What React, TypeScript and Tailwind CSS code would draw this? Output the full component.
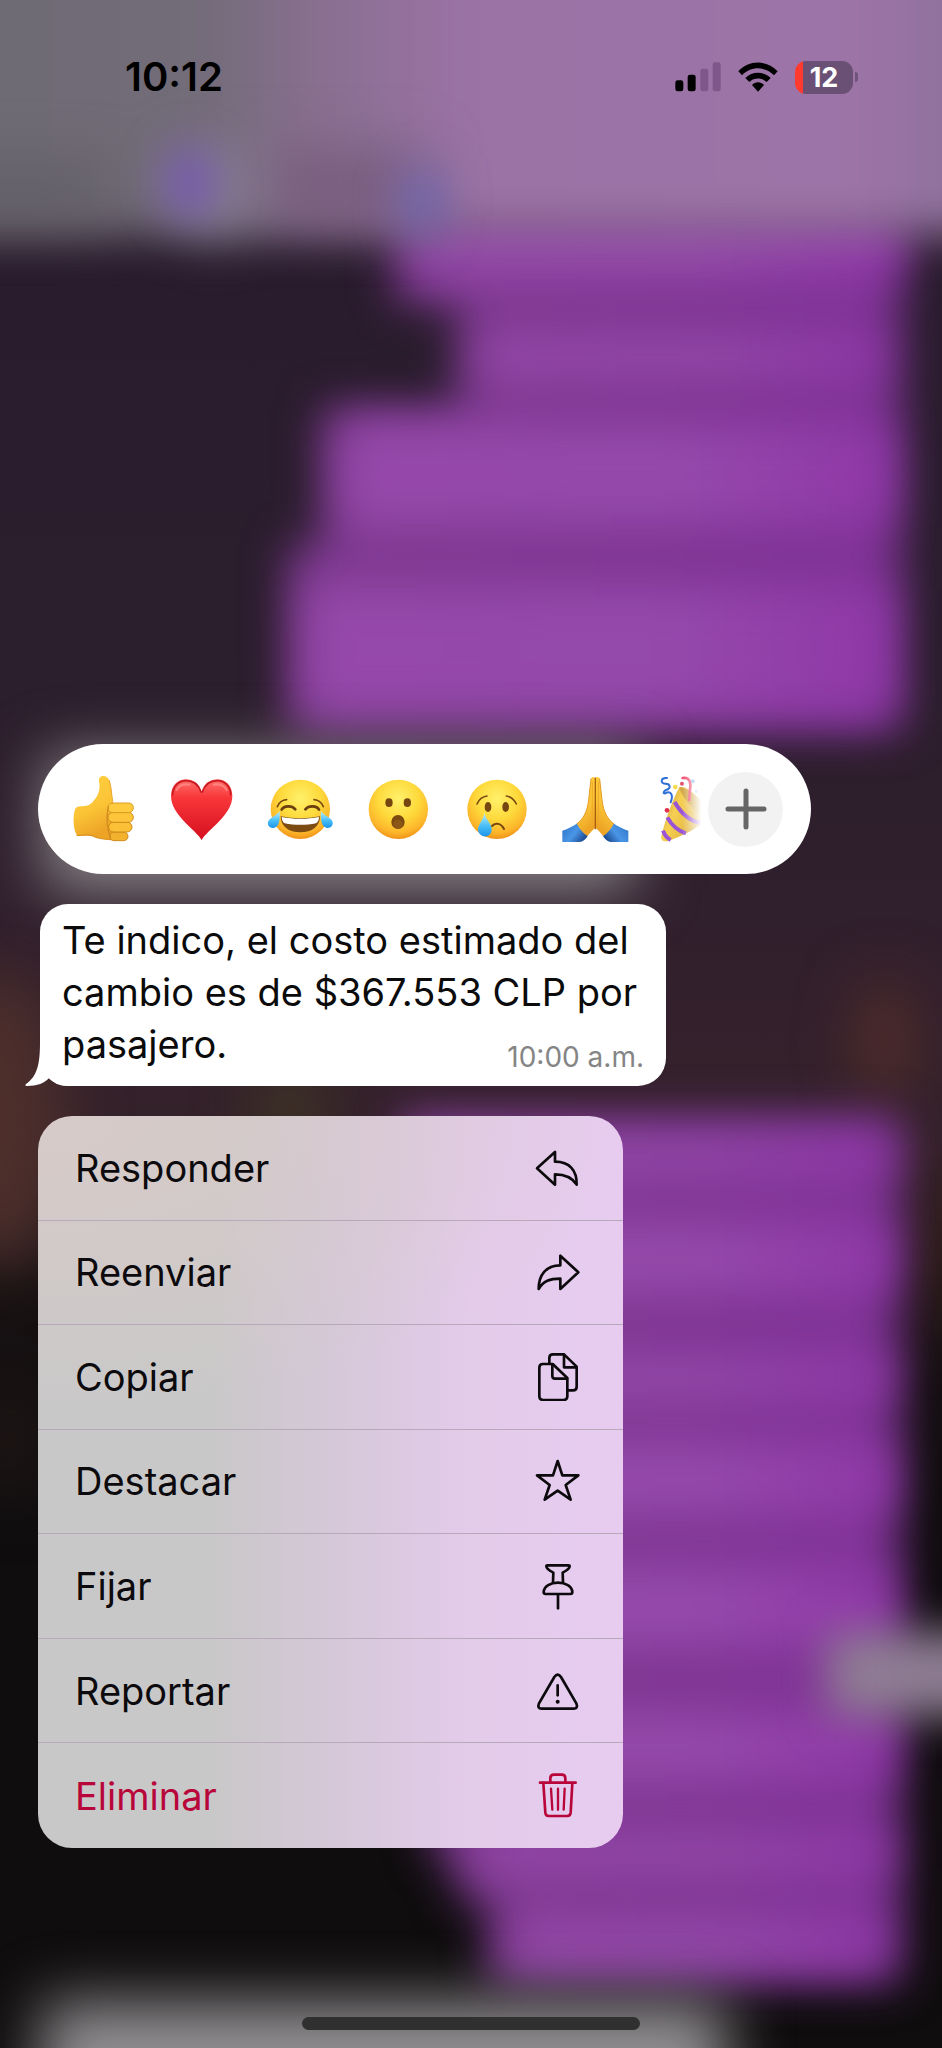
import type { ReactNode } from "react";

/* ---------- Blurred chat wallpaper ---------- */

const bubbleRects: [number, number, number, number][] = [
  [395, 215, 506, 88],
  [458, 297, 443, 112],
  [322, 407, 579, 143],
  [288, 545, 613, 187],
  [400, 1116, 500, 600],
  [430, 1700, 471, 155],
  [455, 1840, 446, 60],
  [488, 1890, 413, 94],
];

const lightBands: [number, number, number, number][] = [
  [420, 232, 480, 46],
  [480, 338, 400, 38],
  [345, 426, 545, 98],
  [308, 588, 582, 124],
  [420, 1140, 470, 34],
  [420, 1224, 470, 70],
  [420, 1358, 470, 40],
  [420, 1444, 470, 70],
  [420, 1568, 470, 78],
  [420, 1714, 470, 66],
  [480, 1836, 410, 36],
  [515, 1920, 365, 42],
];

function Wallpaper() {
  return (
    <svg
      aria-hidden="true"
      className="absolute inset-0 size-full"
      viewBox="0 0 942 2048"
      preserveAspectRatio="none"
    >
      <defs>
        <filter id="soft" x="-100%" y="-100%" width="300%" height="300%" colorInterpolationFilters="sRGB">
          <feGaussianBlur stdDeviation="22" />
        </filter>
        <filter id="softer" x="-100%" y="-100%" width="300%" height="300%" colorInterpolationFilters="sRGB">
          <feGaussianBlur stdDeviation="30" />
        </filter>
        <linearGradient id="night" x1="0" y1="0" x2="0" y2="1">
          <stop offset="0.1" stopColor="#291c2d" />
          <stop offset="0.33" stopColor="#2b1e2d" />
          <stop offset="0.5" stopColor="#33202c" />
          <stop offset="0.56" stopColor="#34222a" />
          <stop offset="0.63" stopColor="#171112" />
          <stop offset="0.75" stopColor="#0f0d0e" />
          <stop offset="1" stopColor="#0f0d0e" />
        </linearGradient>
        <linearGradient id="header" x1="0" y1="0" x2="1" y2="0">
          <stop offset="0.1" stopColor="#6f6b75" />
          <stop offset="0.26" stopColor="#736c79" />
          <stop offset="0.36" stopColor="#896f90" />
          <stop offset="0.5" stopColor="#9b73a5" />
          <stop offset="0.85" stopColor="#9d74a7" />
          <stop offset="0.97" stopColor="#8a7098" />
        </linearGradient>
        <linearGradient id="bubble" x1="0" y1="0" x2="1" y2="0">
          <stop offset="0" stopColor="#803a92" />
          <stop offset="1" stopColor="#803397" />
        </linearGradient>
        <linearGradient id="band" x1="0" y1="0" x2="1" y2="0">
          <stop offset="0" stopColor="#9549aa" />
          <stop offset="0.6" stopColor="#944aaa" />
          <stop offset="1" stopColor="#9037a8" />
        </linearGradient>
      </defs>
      <rect width="942" height="2048" fill="url(#night)" />
      <g filter="url(#softer)">
        <ellipse cx="0" cy="1120" rx="65" ry="150" fill="#4d2f2b" />
        <ellipse cx="885" cy="1040" rx="26" ry="60" fill="#57302a" />
        <ellipse cx="942" cy="1250" rx="22" ry="90" fill="#3a2420" />
        <ellipse cx="10" cy="1440" rx="30" ry="60" fill="#1f1716" />
        <ellipse cx="290" cy="1105" rx="36" ry="24" fill="#464020" />
      </g>
      <g filter="url(#soft)">
        {bubbleRects.map(([x, y, w, h]) => (
          <rect key={y} x={x} y={y} width={w} height={h} fill="url(#bubble)" />
        ))}
      </g>
      <g filter="url(#soft)">
        {lightBands.map(([x, y, w, h]) => (
          <rect key={y} x={x} y={y} width={w} height={h} fill="url(#band)" />
        ))}
      </g>
      <g filter="url(#soft)">
        <rect x="-80" y="-80" width="1102" height="315" fill="url(#header)" />
      </g>
      <g filter="url(#softer)">
        <rect x="-80" y="170" width="190" height="44" fill="#5e5b62" />
        <rect x="270" y="155" width="150" height="62" fill="#745a7a" />
        <ellipse cx="215" cy="190" rx="36" ry="40" fill="#8c8496" />
      </g>
      <g filter="url(#soft)">
        <ellipse cx="190" cy="183" rx="24" ry="36" fill="#7655b4" />
        <ellipse cx="422" cy="202" rx="22" ry="34" fill="#6d66b0" />
      </g>
      <g filter="url(#softer)">
        <rect x="45" y="755" width="590" height="135" fill="#8c888b" />
        <rect x="42" y="2002" width="684" height="140" fill="#929092" />
      </g>
      <g filter="url(#soft)">
        <rect x="828" y="1632" width="200" height="84" fill="#8f7e94" />
      </g>
    </svg>
  );
}

/* ---------- Status bar ---------- */

function StatusBar() {
  return (
    <header className="flex items-center justify-between pt-[56px] pr-[84px] pl-[125px]">
      <time className="text-[40px] leading-[42px] font-semibold text-black">10:12</time>
      <div className="flex items-center gap-[17px]">
        <svg aria-label="Señal móvil" role="img" className="h-[30px] w-[46px]" viewBox="106 64 138 90">
          <rect x="107" y="119" width="24" height="33" rx="7" />
          <rect x="144" y="102" width="24" height="50" rx="7" />
          <rect x="182" y="84" width="24" height="68" rx="7" fill="#80578a" />
          <rect x="219" y="65" width="24" height="87" rx="7" fill="#80578a" />
        </svg>
        <svg aria-label="Wi-Fi" role="img" className="h-[30px] w-[40px]" viewBox="294 64 120 90">
          <path d="M295 92 C326 57 382 57 413 92 L402 104 C376 76 332 76 306 104Z" />
          <path d="M316 112 C337 91 371 91 392 112 L380 124 C366 110 342 110 328 124Z" />
          <path d="M336 133 C346 122 362 122 372 133 L354 153Z" />
        </svg>
        <div className="flex items-center gap-[2px]">
          <div className="flex h-[33px] w-[58px] items-center overflow-hidden rounded-[11px] bg-[#6b5075] bg-linear-to-r from-[#ff3b2f] from-13% to-transparent to-13%">
            <span className="w-full text-center text-[27px] leading-[33px] font-bold text-white">12</span>
          </div>
          <div className="h-[10px] w-[3px] rounded-r-full bg-[#6f547a]" />
        </div>
      </div>
    </header>
  );
}

/* ---------- Reaction drawings ---------- */

function EmojiDefs() {
  return (
    <svg aria-hidden="true" className="absolute size-0">
      <defs>
        <radialGradient id="face" cx="0.5" cy="0.32" r="0.7">
          <stop offset="0" stopColor="#fff16b" />
          <stop offset="0.5" stopColor="#fed93b" />
          <stop offset="0.82" stopColor="#fcb52a" />
          <stop offset="1" stopColor="#ee8c14" />
        </radialGradient>
        <linearGradient id="skin" x1="0" y1="0" x2="0.3" y2="1">
          <stop offset="0" stopColor="#ffcf40" />
          <stop offset="0.6" stopColor="#fbc436" />
          <stop offset="1" stopColor="#eda326" />
        </linearGradient>
        <linearGradient id="heart" x1="0" y1="0" x2="0" y2="1">
          <stop offset="0" stopColor="#ff6f6b" />
          <stop offset="0.3" stopColor="#f8373a" />
          <stop offset="1" stopColor="#d50f1f" />
        </linearGradient>
        <linearGradient id="tear" x1="0" y1="0" x2="0" y2="1">
          <stop offset="0" stopColor="#bdeeff" />
          <stop offset="0.55" stopColor="#49bff7" />
          <stop offset="1" stopColor="#1c94ea" />
        </linearGradient>
        <linearGradient id="sleeve" x1="0" y1="0" x2="1" y2="0.6">
          <stop offset="0" stopColor="#2b6fc4" />
          <stop offset="0.6" stopColor="#4a96e6" />
          <stop offset="1" stopColor="#1d4f98" />
        </linearGradient>
        <linearGradient id="cone" x1="0" y1="0" x2="1" y2="0.5">
          <stop offset="0" stopColor="#b98a35" />
          <stop offset="0.4" stopColor="#f6cf52" />
          <stop offset="1" stopColor="#d9a83a" />
        </linearGradient>
      </defs>
    </svg>
  );
}

function Emoji({ viewBox, children }: { viewBox: string; children: ReactNode }) {
  return (
    <svg aria-hidden="true" className="size-[66px] overflow-visible" viewBox={viewBox} fill="none" strokeLinecap="round">
      {children}
    </svg>
  );
}

const thumb = (
  <Emoji viewBox="124 108 198 198">
    <path
      d="M142 201C156 196 172 202 187 188C203 172 214 152 208 124C205 104 233 102 239 122C246 144 245 162 249 186L252 298C228 300 205 296 190 288C174 281 160 290 145 287C129 280 127 208 142 201Z"
      fill="url(#skin)"
    />
    <path d="M142 286C158 288 172 281 190 288C205 296 222 298 244 299" stroke="#dd9420" strokeWidth="4" />
    <path d="M239 122C246 144 245 162 249 184" stroke="#e9a42b" strokeWidth="3" />
    <rect x="240" y="276" width="55" height="26" rx="13" fill="#f3b22e" stroke="#cf8a1c" strokeWidth="3" />
    <rect x="237" y="246" width="70" height="30" rx="15" fill="#fbc036" stroke="#cf8a1c" strokeWidth="3" />
    <rect x="235" y="217" width="76" height="30" rx="15" fill="#fdc63a" stroke="#cf8a1c" strokeWidth="3" />
    <rect x="235" y="189" width="76" height="29" rx="14" fill="#fecb3e" stroke="#d99a24" strokeWidth="3" />
    <path d="M236 200C230 230 232 268 243 294" stroke="#d08d1e" strokeWidth="4" />
  </Emoji>
);

const heart = (
  <Emoji viewBox="417 108 198 198">
    <path
      d="M515 300C497 268 423 226 423 168C423 136 444 118 468 118C492 118 510 134 515 156C520 134 538 118 562 118C586 118 607 136 607 168C607 226 533 268 515 300Z"
      fill="url(#heart)"
    />
    <path d="M428 165C428 138 447 122 468 122C490 122 506 136 513 156M517 156C524 136 540 122 562 122C583 122 602 138 602 165" stroke="#c91a22" strokeWidth="5" />
    <path d="M440 150C448 135 462 131 478 134M552 134C568 131 582 136 590 150" stroke="#ffa7a0" strokeWidth="7" opacity="0.5" />
  </Emoji>
);

const laugh = (
  <Emoji viewBox="711 108 198 198">
    <circle cx="811" cy="208" r="89" fill="url(#face)" />
    <path d="M742 200C747 188 756 180 770 179M880 200C875 188 866 180 852 179" stroke="#7a4a12" strokeWidth="5" />
    <path d="M755 209C762 196 786 196 796 208M867 209C860 196 836 196 826 208" stroke="#6b3f0e" strokeWidth="8" />
    <path d="M752 229C790 237 832 237 870 229C870 260 846 277 811 277S752 260 752 229Z" fill="#7b4b12" />
    <path d="M755 231C790 238 832 238 867 231C867 240 864 246 858 250C828 256 794 256 764 250C758 246 755 240 755 231Z" fill="#fff" />
    <path d="M749 214C751 240 747 262 731 264C713 265 708 245 721 236C732 229 742 223 749 214Z" fill="url(#tear)" />
    <path d="M873 214C871 240 875 262 891 264C909 265 914 245 901 236C890 229 880 223 873 214Z" fill="url(#tear)" />
  </Emoji>
);

const wow = (
  <Emoji viewBox="1005 108 198 198">
    <circle cx="1105" cy="208" r="89" fill="url(#face)" />
    <ellipse cx="1077" cy="188" rx="11" ry="13" fill="#75460f" />
    <ellipse cx="1132" cy="188" rx="11" ry="13" fill="#75460f" />
    <ellipse cx="1104" cy="246" rx="20" ry="21" fill="#7b4a10" />
    <ellipse cx="1104" cy="252" rx="14" ry="13" fill="#8c5716" />
  </Emoji>
);

const cry = (
  <Emoji viewBox="99 108 198 198">
    <circle cx="201" cy="208" r="89" fill="url(#face)" />
    <path d="M141 192C147 178 156 170 171 168M229 168C243 170 252 178 259 192" stroke="#7a4a12" strokeWidth="5" />
    <ellipse cx="174" cy="201" rx="10" ry="15" fill="#75460f" />
    <ellipse cx="227" cy="201" rx="10" ry="15" fill="#75460f" />
    <path d="M186 258C196 246 214 250 222 267" stroke="#75460f" strokeWidth="6" />
    <path d="M163 219C167 240 186 250 185 270C183 297 145 295 144 268C145 252 160 240 163 219Z" fill="url(#tear)" />
  </Emoji>
);

const prayHalf = (
  <>
    <path d="M397 272C414 266 430 258 444 248C452 264 462 278 474 286C468 298 461 304 450 306L397 306Z" fill="url(#sleeve)" />
    <path
      d="M483 117C485 109 495 109 496 118L496 264C486 270 480 280 472 288C460 280 448 266 441 251C458 240 472 216 476 180Z"
      fill="url(#skin)"
    />
    <path d="M483 117L476 180C472 216 458 240 441 251" stroke="#e39a20" strokeWidth="3" />
  </>
);

const pray = (
  <Emoji viewBox="393 108 198 198">
    {prayHalf}
    <g transform="translate(992 0) scale(-1 1)">{prayHalf}</g>
    <path d="M496 114V266" stroke="#a8620f" strokeWidth="4" />
    <path d="M487 126V250M505 126V250" stroke="#f0a828" strokeWidth="3" />
  </Emoji>
);

const party = (
  <Emoji viewBox="687 108 198 198">
    <path d="M748 142C772 132 832 190 838 232C812 262 744 294 712 304C698 306 692 300 694 290C704 242 728 180 748 142Z" fill="url(#cone)" />
    <path d="M748 142C770 136 830 190 838 232C800 226 756 176 748 142Z" fill="#d3a647" />
    <path d="M734 186C754 222 782 244 815 250M712 232C726 258 744 272 768 280M699 272C704 286 710 294 722 300" stroke="#9a53d6" strokeWidth="12" strokeLinecap="butt" />
    <path d="M711 114C692 112 690 130 705 131C722 130 724 146 708 150C700 154 698 162 706 160C720 152 732 162 722 187" stroke="#2f6fd8" strokeWidth="6" />
    <path d="M758 114C780 110 784 130 780 150L778 180" stroke="#f0476c" strokeWidth="8" />
    <circle cx="736" cy="141" r="7" fill="#f6dc4c" />
    <circle cx="756" cy="131" r="6" fill="#e0506a" />
    <circle cx="711" cy="211" r="7" fill="#e0304c" />
    <circle cx="789" cy="124" r="6" fill="#7fb0ea" />
    <circle cx="799" cy="154" r="5" fill="#a8ccf4" />
  </Emoji>
);

const reactions: { name: string; art: ReactNode }[] = [
  { name: "Me gusta", art: thumb },
  { name: "Corazón", art: heart },
  { name: "Risa", art: laugh },
  { name: "Asombro", art: wow },
  { name: "Tristeza", art: cry },
  { name: "Gracias", art: pray },
  { name: "Fiesta", art: party },
];

function ReactionBar() {
  return (
    <div className="flex h-[130px] w-full max-w-[773px] items-center rounded-full bg-white pr-[28px] pl-[17px]">
      <div className="flex min-w-0 flex-1 overflow-hidden mask-r-from-96% mask-r-to-99%">
        {reactions.map(({ name, art }) => (
          <button key={name} type="button" aria-label={name} className="flex w-[98px] shrink-0 justify-center py-4">
            {art}
          </button>
        ))}
      </div>
      <button
        type="button"
        aria-label="Más reacciones"
        className="flex size-[75px] shrink-0 items-center justify-center rounded-full bg-[#f2f2f2]"
      >
        <svg aria-hidden="true" className="size-[42px]" viewBox="0 0 42 42" stroke="#666" strokeWidth="5" strokeLinecap="round">
          <path d="M21 3V39M3 21H39" />
        </svg>
      </button>
    </div>
  );
}

/* ---------- Message ---------- */

function Message() {
  return (
    <article className="relative ml-[2px] w-full max-w-[626px] rounded-[28px] bg-white px-[22px] pt-[10px] pb-[12px]">
      <svg aria-hidden="true" className="absolute bottom-0 -left-[15px] h-[44px] w-[46px]" viewBox="0 0 46 44" fill="#fff">
        <path d="M15 0C15 20 13 34 1 42C0 43 0 44 2 44C12 44 20 41 24 36C29 41 34 44 43 44L46 0Z" />
      </svg>
      <p className="relative text-[38px] leading-[52px] text-[#0b0b0b]">
        Te indico, el costo estimado del cambio es de $367.553 CLP por pasajero.
        <time className="float-right mt-[22px] text-[28px] leading-[34px] text-[#858585]">10:00 a.m.</time>
      </p>
    </article>
  );
}

/* ---------- Context menu ---------- */

function MenuIcon({ viewBox, children }: { viewBox: string; children: ReactNode }) {
  return (
    <svg
      aria-hidden="true"
      className="size-[48px]"
      viewBox={viewBox}
      fill="none"
      stroke="currentColor"
      strokeWidth="8"
      strokeLinecap="round"
      strokeLinejoin="round"
    >
      {children}
    </svg>
  );
}

const menu: { label: string; danger?: boolean; icon: ReactNode }[] = [
  {
    label: "Responder",
    icon: (
      <MenuIcon viewBox="99 103 144 144">
        <path d="M111 176L165 127V156C209 156 231 182 230 225C216 202 196 194 165 194V225Z" />
      </MenuIcon>
    ),
  },
  {
    label: "Reenviar",
    icon: (
      <MenuIcon viewBox="99 417 144 144">
        <path d="M235 490L181 440V469C138 469 116 498 116 540C130 516 150 509 181 509V540Z" />
      </MenuIcon>
    ),
  },
  {
    label: "Copiar",
    icon: (
      <MenuIcon viewBox="99 730 144 144">
        <path d="M129 763H158L202 805V859Q202 871 190 871H130Q118 871 118 859V774Q118 763 129 763Z" />
        <path d="M157 764V799Q157 807 165 807H201" />
        <path d="M148 760V745Q148 734 159 734H192L230 771V831Q230 842 219 842H205" />
        <path d="M192 735V773H229" />
      </MenuIcon>
    ),
  },
  {
    label: "Destacar",
    icon: (
      <MenuIcon viewBox="99 84 144 144">
        <path d="M173 96L187 139H235L197 168L212 212L173 185L134 212L149 168L111 139H159Z" />
      </MenuIcon>
    ),
  },
  {
    label: "Fijar",
    icon: (
      <MenuIcon viewBox="99 398 144 144">
        <path d="M159 459L160 430C150 425 139 419 139 411Q139 408 143 408H205Q209 408 209 411C209 419 198 425 188 430L189 459" />
        <path d="M137 494Q131 494 131 488C132 470 152 460 174 460S216 470 217 488Q217 494 211 494Z" />
        <path d="M174 496V537" />
      </MenuIcon>
    ),
  },
  {
    label: "Reportar",
    icon: (
      <MenuIcon viewBox="99 711 144 144">
        <path d="M163 741Q173 727 183 741L229 820Q235 836 221 836H125Q111 836 117 820Z" />
        <path d="M173 766V796" />
        <circle cx="173" cy="815" r="6" fill="currentColor" stroke="none" />
      </MenuIcon>
    ),
  },
  {
    label: "Eliminar",
    danger: true,
    icon: (
      <MenuIcon viewBox="99 1025 144 144">
        <path d="M120 1057H227M151 1055V1044Q151 1033 162 1033H185Q196 1033 196 1044V1055" />
        <path d="M130 1058L136 1147Q137 1157 146 1157H202Q211 1157 212 1147L217 1058" />
        <path d="M153 1075L157 1138M174 1075V1138M194 1075L191 1138" strokeWidth="7" />
      </MenuIcon>
    ),
  },
];

function ContextMenu() {
  return (
    <ul className="grid min-h-[732px] w-full max-w-[585px] auto-rows-fr divide-y divide-[#b7a9ba] overflow-hidden rounded-[34px] bg-[radial-gradient(100%_40%_at_0%_0%,#d8cbc9_0%,#d8cbc900_100%),linear-gradient(to_right,#c9c8c8_30%,#d5c8d8_50%,#e3cbea_74%,#e7ccf0_100%)]">
      {menu.map(({ label, danger, icon }) => (
        <li key={label} className={danger ? "flex text-[#b8063a]" : "flex text-[#0c0a0d]"}>
          <button type="button" className="flex flex-1 items-center justify-between pr-[42px] pl-[37px] text-left text-[38px] leading-[52px]">
            {label}
            {icon}
          </button>
        </li>
      ))}
    </ul>
  );
}

export default function App() {
  return (
    <div className="relative isolate flex min-h-screen flex-col overflow-hidden bg-[#0f0d0e] font-['Inter','Liberation_Sans',sans-serif]">
      <Wallpaper />
      <EmojiDefs />
      <div className="relative flex flex-1 flex-col">
        <StatusBar />
        <main className="mt-auto flex flex-col items-start gap-[30px] px-[38px] pb-[169px]">
          <ReactionBar />
          <Message />
          <ContextMenu />
        </main>
        <footer className="flex justify-center pb-[18px]">
          <div className="h-[13px] w-[338px] rounded-full bg-[#303030]" />
        </footer>
      </div>
    </div>
  );
}
